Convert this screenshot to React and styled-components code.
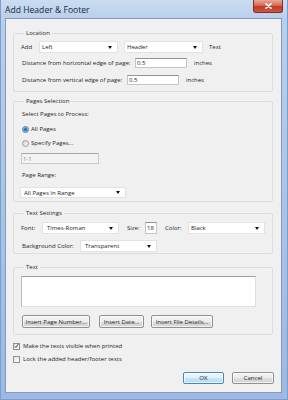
import React from 'react'
import styled, { createGlobalStyle } from 'styled-components'

const Global = createGlobalStyle`
  html, body { margin: 0; padding: 0; background: #a9c3e6; }
  body { font-family: "Open Sans", "Noto Sans", sans-serif; }
`

const Window = styled.div`
  width: 288px;
  height: 400px;
  box-sizing: border-box;
  display: flex;
  flex-direction: column;
  padding: 0 6px 7px 5px;
  overflow: hidden;
  background: linear-gradient(180deg, #cadcf1 0px, #b9d0ec 18px, #a8c3e8 55%, #9cb9e3 100%);
  box-shadow: inset 1px 0 0 #7f9dc9, inset -1px 0 0 #7f9dc9, inset 0 -1px 0 #7f9dc9;
`

const TitleBar = styled.div`
  height: 18px;
  flex-shrink: 0;
  display: flex;
  justify-content: space-between;
`

const Title = styled.span`
  font-size: 8.6px;
  line-height: 18px;
  color: #1c2838;
  padding-top: 1px;
`

const CloseButton = styled.div`
  width: 30px;
  height: 13px;
  margin-right: -1px;
  box-sizing: border-box;
  display: flex;
  align-items: center;
  justify-content: center;
  border: 1px solid #7a3328;
  border-top: none;
  border-radius: 0 0 3px 3px;
  background: linear-gradient(180deg, #eaa597 0%, #d66a55 45%, #c13a24 55%, #d0583f 100%);
`

const Client = styled.div`
  flex: 1;
  display: flex;
  flex-direction: column;
  padding: 9px 8px 0 7px;
  background: #f0f0f0;
  border: 1px solid #8499bb;
  color: #1e1e1e;
  font-size: 6px;
  line-height: 10px;
`

const Group = styled.fieldset`
  margin: ${p => p.$mt || 0}px 0 0;
  padding: ${p => p.$pad};
  min-width: 0;
  border: 1px solid #d9dde1;
  border-radius: 2px;
`

const Legend = styled.legend`
  margin-left: 3px;
  padding: 0 2px;
  font-size: 6px;
  line-height: 10px;
`

const Row = styled.div`
  display: flex;
  align-items: center;
  height: ${p => p.$h || 10}px;
  gap: ${p => p.$gap || 0}px;
  margin-top: ${p => p.$mt || 0}px;
  margin-left: ${p => p.$ml || 0}px;
  flex-shrink: 0;
`

const Label = styled.span`
  width: ${p => (p.$w ? `${p.$w}px` : 'auto')};
  padding-left: ${p => p.$pl || 0}px;
  margin-left: ${p => p.$ml || 0}px;
  box-sizing: border-box;
  flex-shrink: 0;
  white-space: nowrap;
`

const Select = styled.div`
  width: ${p => p.$w}px;
  height: ${p => p.$h || 12}px;
  box-sizing: border-box;
  display: flex;
  align-items: center;
  justify-content: space-between;
  padding: 0 5px 0 ${p => p.$pl || 2}px;
  background: #fff;
  border: 1px solid #e2e2e2;
  margin-left: ${p => p.$ml || 0}px;
  flex-shrink: 0;
  white-space: nowrap;
`

const Caret = styled.span`
  width: 0;
  height: 0;
  border-left: 2px solid transparent;
  border-right: 2px solid transparent;
  border-top: 3px solid #111;
`

const TextInput = styled.input`
  width: ${p => p.$w}px;
  height: ${p => p.$h || 10}px;
  box-sizing: border-box;
  padding: 0 1px;
  font: inherit;
  font-size: 6px;
  color: ${p => (p.disabled ? '#8c8c8c' : '#1e1e1e')};
  background: ${p => (p.disabled ? '#f3f3f3' : '#fff')};
  border: 1px solid ${p => (p.disabled ? '#c9c9c9' : '#c2c5c9')};
  border-top-color: ${p => (p.disabled ? '#a8a8a8' : '#8f9296')};
  border-radius: 0;
  outline: none;
  flex-shrink: 0;
`

const TextArea = styled.textarea`
  display: block;
  width: 235px;
  height: 31px;
  box-sizing: border-box;
  margin-top: 4px;
  padding: 1px;
  resize: none;
  background: #fff;
  border: 1px solid #dcdfe3;
  border-top-color: #9a9da1;
  border-left-color: #b8bbbf;
  outline: none;
`

const Radio = styled.span`
  width: 7px;
  height: 7px;
  box-sizing: border-box;
  border-radius: 50%;
  border: 1px solid ${p => (p.$on ? '#5b7ea6' : '#9a9a9a')};
  background: ${p =>
    p.$on
      ? 'radial-gradient(circle, #1f5fa6 0, #3d8ad6 1.5px, #a9cdf0 2.6px, #e8eef5 3px)'
      : 'linear-gradient(135deg, #d6d6d6, #f7f7f7)'};
  flex-shrink: 0;
`

const Check = styled.span`
  width: 7px;
  height: 7px;
  box-sizing: border-box;
  border: 1px solid #8e8f8f;
  background: linear-gradient(135deg, #e2e2e2, #fdfdfd);
  display: flex;
  align-items: center;
  justify-content: center;
  flex-shrink: 0;
`

const Button = styled.button`
  width: ${p => p.$w}px;
  height: ${p => p.$h || 13}px;
  margin-left: ${p => p.$ml || 0}px;
  padding: 0;
  font: inherit;
  font-size: 6px;
  line-height: 1;
  white-space: nowrap;
  color: #1e1e1e;
  border: 1px solid ${p => (p.$primary ? '#4c86b8' : '#8f9090')};
  border-radius: 2px;
  background: ${p =>
    p.$primary
      ? 'linear-gradient(180deg, #eef7fd 0%, #dff1fc 50%, #c6e6f9 50%, #b4dcf3 100%)'
      : 'linear-gradient(180deg, #f4f4f4 0%, #ececec 50%, #dedede 50%, #d2d2d2 100%)'};
  box-shadow: inset 0 0 0 1px rgba(255, 255, 255, 0.7);
  flex-shrink: 0;
`

const Footer = styled.div`
  display: flex;
  justify-content: flex-end;
  gap: 8px;
  margin: 8px -1px 0 0;
`

const App = () => (
  <Window>
    <Global />
    <TitleBar>
      <Title>Add Header &amp; Footer</Title>
      <CloseButton>
        <svg width="7" height="6" viewBox="0 0 7 6">
          <path d="M1 0.8 L6 5.2 M6 0.8 L1 5.2" stroke="#fff" strokeWidth="1.6" strokeLinecap="round" />
        </svg>
      </CloseButton>
    </TitleBar>

    <Client>
      <Group $pad="3px 0 6px 7px">
        <Legend>Location</Legend>
        <Row $h={12}>
          <Label $w={18}>Add</Label>
          <Select $w={79}>Left<Caret /></Select>
          <Select $w={79} $ml={6}>Header<Caret /></Select>
          <Label $ml={6}>Text</Label>
        </Row>
        <Row $mt={5}>
          <Label $w={114} $pl={1}>Distance from horizontal edge of page:</Label>
          <TextInput $w={52} readOnly value="0.5" />
          <Label $ml={7}>inches</Label>
        </Row>
        <Row $mt={7}>
          <Label $w={106} $pl={1}>Distance from vertical edge of page:</Label>
          <TextInput $w={52} readOnly value="0.5" />
          <Label $ml={7}>inches</Label>
        </Row>
      </Group>

      <Group $mt={4} $pad="3px 0 3px 7px">
        <Legend>Pages Selection</Legend>
        <Row $ml={1}>Select Pages to Process:</Row>
        <Row $mt={5} $ml={1} $gap={2}>
          <Radio $on />
          <Label>All Pages</Label>
        </Row>
        <Row $mt={4} $ml={1} $gap={2}>
          <Radio />
          <Label>Specify Pages...</Label>
        </Row>
        <Row $mt={5} $h={11}>
          <TextInput $w={78} $h={11} disabled value="1-1" readOnly />
        </Row>
        <Row $mt={6} $ml={1}>Page Range:</Row>
        <Row $mt={7} $h={11}>
          <Select $w={106} $h={11} $ml={-1} $pl={3}>All Pages In Range<Caret /></Select>
        </Row>
      </Group>

      <Group $mt={6} $pad="4px 0 1px 7px">
        <Legend>Text Settings</Legend>
        <Row $h={12}>
          <Label $w={21}>Font:</Label>
          <Select $w={77} $pl={4}>Times-Roman<Caret /></Select>
          <Label $w={18} $ml={8}>Size:</Label>
          <TextInput $w={12} $h={12} readOnly value="18" />
          <Label $w={23} $ml={8}>Color:</Label>
          <Select $w={77}>Black<Caret /></Select>
        </Row>
        <Row $h={12} $mt={6}>
          <Label $w={59} $pl={1}>Background Color:</Label>
          <Select $w={77} $pl={4}>Transparent<Caret /></Select>
        </Row>
      </Group>

      <Group $mt={8} $pad="0 0 6px 7px">
        <Legend>Text</Legend>
        <TextArea readOnly />
        <Row $h={13} $mt={8} $ml={1}>
          <Button $w={68}>Insert Page Number...</Button>
          <Button $w={45} $ml={9}>Insert Date...</Button>
          <Button $w={62} $ml={7}>Insert File Details...</Button>
        </Row>
      </Group>

      <Row $mt={6} $gap={3}>
        <Check>
          <svg width="6" height="6" viewBox="0 0 6 6">
            <path d="M0.8 3.2 L2.3 4.9 L5.3 0.6" stroke="#26477a" strokeWidth="1.1" fill="none" />
          </svg>
        </Check>
        <Label>Make the texts visible when printed</Label>
      </Row>
      <Row $mt={3} $gap={3}>
        <Check />
        <Label>Lock the added header/footer texts</Label>
      </Row>

      <Footer>
        <Button $w={41} $h={12} $primary>OK</Button>
        <Button $w={42} $h={12}>Cancel</Button>
      </Footer>
    </Client>
  </Window>
)

export default App
